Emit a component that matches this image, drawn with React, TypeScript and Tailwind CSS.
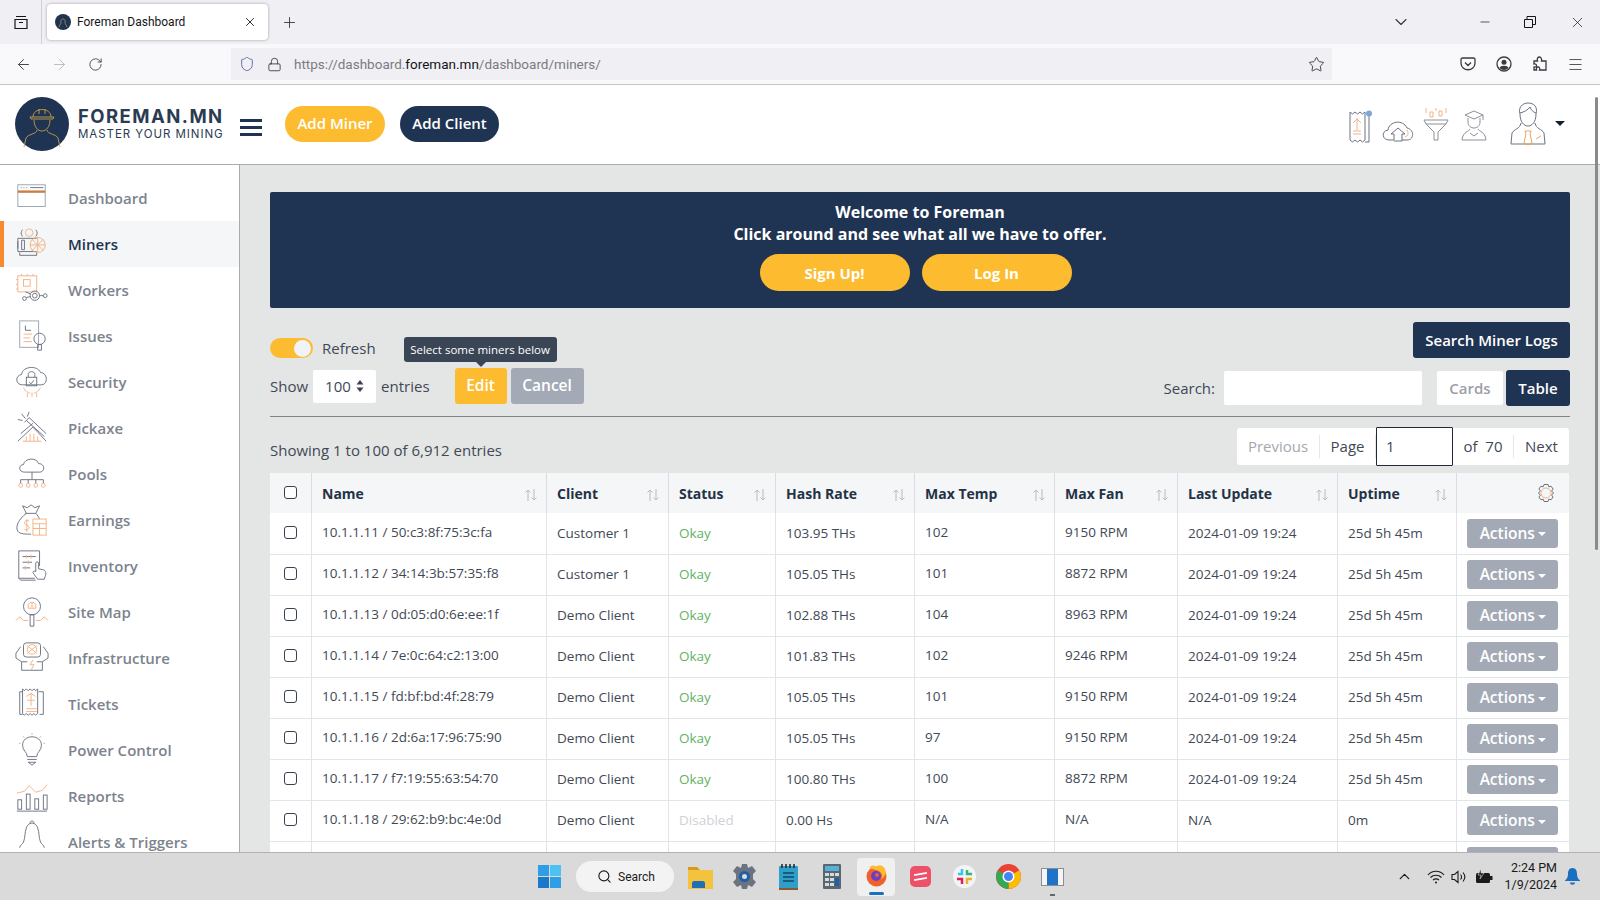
import React from "react";
import { ArrowLeft, ArrowRight, RotateCw, Star, Lock, Shield, Menu, Plus, X, ChevronDown, ChevronUp, Minus, Search } from "lucide-react";

const G = "#6b7280";
const O = "#f3b283";

const Ic = ({ children, w = 36, h = 36 }: { children: React.ReactNode; w?: number; h?: number }) => (
  <svg width={w} height={h} viewBox="0 0 36 36" fill="none" stroke={G} strokeWidth="1" className="shrink-0 overflow-visible">
    {children}
  </svg>
);

const sidebarIcons: Record<string, React.ReactNode> = {
  Dashboard: (
    <>
      <rect x="3" y="4" width="29" height="23" stroke="#9ca3af" />
      <rect x="3" y="10" width="29" height="2.5" fill="#c77f45" stroke="none" />
      <path d="M6 7h1M9 7h1M12 7h1M16 7h14" />
    </>
  ),
  Miners: (
    <>
      <circle cx="15" cy="6" r="4" stroke={O} />
      <path d="M8 3c-2 2-2 5 0 7M22 3c2 2 2 5 0 7" />
      <path d="M3 12h20M3 12v14h20M3 15v8M7 14h3v10H7zM5 27v3h18v-3" />
      <circle cx="24" cy="19" r="8" stroke={O} />
      <path d="M24 11v16M16 19h16M18 13l12 12M30 13L18 25" stroke={O} />
    </>
  ),
  Workers: (
    <>
      <rect x="3" y="3" width="20" height="17" stroke={O} />
      <path d="M1 7h2M1 12h2M1 17h2M7 1v2M13 1v2M19 1v2" stroke={O} />
      <rect x="9" y="7" width="7" height="7" stroke={O} />
      <circle cx="21" cy="24" r="5" />
      <circle cx="21" cy="24" r="2.5" />
      <circle cx="10" cy="27" r="2" />
      <circle cx="32" cy="24" r="2" />
      <path d="M12 26l4-1M26 24h4M11 20l5 2" />
    </>
  ),
  Issues: (
    <>
      <rect x="5" y="2" width="20" height="28" stroke="#9ca3af" />
      <path d="M11 7v5h6" stroke={G} />
      <path d="M9 16h9M9 20h7M9 24h9" stroke={O} />
      <circle cx="26" cy="21" r="6" />
      <path d="M24 27h4v6h-4z" />
    </>
  ),
  Security: (
    <>
      <path d="M8 21c-8 0-8-10-1-11 1-9 17-10 20-2 8 0 8 13 1 13z" />
      <rect x="12" y="13" width="11" height="9" />
      <path d="M14 13v-3c0-4 7-4 7 0v3M15 18l2 2 3-4" />
      <path d="M9 24c2 4 4 5 7 6M27 24c-2 4-4 5-7 6M13 30v4M18 29v5M23 30v4" stroke={O} />
    </>
  ),
  Pickaxe: (
    <>
      <path d="M12 10l19 17M15 7l18 17M10 12l5-5" />
      <path d="M6 24L19 13M3 32L19 17l14 15" />
      <path d="M7 3l4 5M15 1l-2 5M3 9l5 1" />
      <path d="M12 32v-5M16 32v-8M20 32v-8M24 32v-5M8 32h20" stroke={O} />
    </>
  ),
  Pools: (
    <>
      <path d="M10 16c-7 0-6-8-1-8 1-7 14-8 16-1 7 0 7 9 1 9z" />
      <path d="M18 16v8M6 24h24M6 24v4M14 24v4M22 24v4M30 24v4" />
      <circle cx="6" cy="30" r="2" stroke={O} />
      <circle cx="14" cy="30" r="2" stroke={O} />
      <circle cx="22" cy="30" r="2" stroke={O} />
      <circle cx="30" cy="30" r="2" stroke={O} />
    </>
  ),
  Earnings: (
    <>
      <path d="M12 11c-8 6-12 14-9 19 2 3 9 3 14 3M22 11c2 2 3 4 4 6M11 11h11M12 11L8 3l5 2 4-3 4 3 5-2-4 8" />
      <path d="M15 19c-3-1-5 0-5 2 0 3 5 2 5 5 0 2-3 3-5 2M12.500 17v14" stroke={O} />
      <rect x="19" y="17" width="14" height="17" stroke={O} />
      <path d="M19 22h14M19 27h14M26 22v12" stroke={O} />
    </>
  ),
  Inventory: (
    <>
      <path d="M26 18V2H4v29h17M4 31l2 2h16" />
      <path d="M8 8h14M8 14h10M8 20h8" />
      <path d="M12 6v4M17 6v4M14 12v4M11 18v4" stroke={O} />
      <path d="M22 24v-9c0-2 3-2 3 0v6l5 1c3 1 3 4 2 7l-1 3h-7l-5-7c0-2 2-2 3-1z" />
    </>
  ),
  "Site Map": (
    <>
      <circle cx="18" cy="12" r="9" />
      <path d="M14 14v-4l2-2h4l2 2v4zM18 8v6" stroke={O} />
      <path d="M16 21h4v12h-4z" />
      <path d="M1 27l4-4 4 4h5M35 27l-4-4-4 4h-5" stroke={O} />
    </>
  ),
  Infrastructure: (
    <>
      <rect x="9" y="2" width="18" height="15" rx="3" />
      <circle cx="18" cy="9" r="5" stroke={O} />
      <path d="M13 5l10 8M23 5l-10 8" stroke={O} />
      <path d="M6 6L1 13v5l6 4h6M30 6l5 7v5l-6 4h-6" />
      <path d="M7 22v9h22v-9" />
      <path d="M19 20l-3 5h4l-3 6" stroke={O} />
    </>
  ),
  Tickets: (
    <>
      <path d="M8 2l2 2 2-2 2 2 2-2 2 2 2-2 2 2 2-2v26l-2 2-2-2-2 2-2-2-2 2-2-2-2 2-2-2z" />
      <path d="M8 5H5v24h3M25 5h5v24h-4" />
      <path d="M17 6v14M12 10l5-3 5 3M13 14h8M12 23h11M12 26h11" stroke={O} />
    </>
  ),
  "Power Control": (
    <>
      <path d="M13 25c0-5-5-6-5-12 0-12 20-12 20 0 0 6-5 7-5 12z" />
      <path d="M13 28h10M14 31h8l-4 3z" />
      <path d="M18 0v2M8 3l2 2M28 3l-2 2M4 11h2M30 11h2" stroke={O} />
    </>
  ),
  Reports: (
    <>
      <path d="M2 34h32" />
      <rect x="3" y="22" width="4" height="10" />
      <rect x="12" y="16" width="4" height="16" />
      <rect x="21" y="21" width="4" height="11" />
      <rect x="30" y="17" width="4" height="15" />
      <path d="M2 15l8-2 5-6 7 7 7-2 5-6" stroke={O} />
    </>
  ),
  "Alerts & Triggers": (
    <>
      <path d="M5 24c0-3 3-3 4-6 2-5 1-9 3-15 1-3 3-5 6-5s5 2 6 5c2 6 1 10 3 15 1 3 4 3 4 6" />
      <path d="M16-2c0-3 4-3 4 0" />
    </>
  ),
};

const navItems = [
  "Dashboard",
  "Miners",
  "Workers",
  "Issues",
  "Security",
  "Pickaxe",
  "Pools",
  "Earnings",
  "Inventory",
  "Site Map",
  "Infrastructure",
  "Tickets",
  "Power Control",
  "Reports",
  "Alerts & Triggers",
];

const columns = [
  { label: "Name", w: "w-[235px]" },
  { label: "Client", w: "w-[122px]" },
  { label: "Status", w: "w-[107px]" },
  { label: "Hash Rate", w: "w-[139px]" },
  { label: "Max Temp", w: "w-[140px]" },
  { label: "Max Fan", w: "w-[123px]" },
  { label: "Last Update", w: "w-[160px]" },
  { label: "Uptime", w: "w-[119px]" },
];

const rows = [
  ["10.1.1.11 / 50:c3:8f:75:3c:fa", "Customer 1", "Okay", "103.95 THs", "102", "9150 RPM", "2024-01-09 19:24", "25d 5h 45m"],
  ["10.1.1.12 / 34:14:3b:57:35:f8", "Customer 1", "Okay", "105.05 THs", "101", "8872 RPM", "2024-01-09 19:24", "25d 5h 45m"],
  ["10.1.1.13 / 0d:05:d0:6e:ee:1f", "Demo Client", "Okay", "102.88 THs", "104", "8963 RPM", "2024-01-09 19:24", "25d 5h 45m"],
  ["10.1.1.14 / 7e:0c:64:c2:13:00", "Demo Client", "Okay", "101.83 THs", "102", "9246 RPM", "2024-01-09 19:24", "25d 5h 45m"],
  ["10.1.1.15 / fd:bf:bd:4f:28:79", "Demo Client", "Okay", "105.05 THs", "101", "9150 RPM", "2024-01-09 19:24", "25d 5h 45m"],
  ["10.1.1.16 / 2d:6a:17:96:75:90", "Demo Client", "Okay", "105.05 THs", "97", "9150 RPM", "2024-01-09 19:24", "25d 5h 45m"],
  ["10.1.1.17 / f7:19:55:63:54:70", "Demo Client", "Okay", "100.80 THs", "100", "8872 RPM", "2024-01-09 19:24", "25d 5h 45m"],
  ["10.1.1.18 / 29:62:b9:bc:4e:0d", "Demo Client", "Disabled", "0.00 Hs", "N/A", "N/A", "N/A", "0m"],
  ["", "", "", "", "", "", "", ""],
];

const SortArrows = () => (
  <svg width="14" height="14" viewBox="0 0 14 14" fill="none" stroke="#b6bcc4" strokeWidth="1" className="shrink-0 mt-[3px]">
    <path d="M4 13V2M1.500 4.500L4 2l2.500 2.500M10 1v11M7.500 9.500L10 12l2.500-2.500" />
  </svg>
);

const Checkbox = () => <div className="w-[11px] h-[11px] box-content border border-[#374151] rounded-[3px] bg-white mx-auto" />;

const RowCheck = () => <div className="flex justify-center -mt-[2px]"><Checkbox /></div>;

const Actions = () => (
  <div className="w-[91px] h-[29px] mx-auto rounded-[3px] bg-[#a3aab6] text-white text-[15.500px] font-semibold flex items-center justify-center gap-[3px]">
    Actions
    <span className="w-0 h-0 border-x-[4px] border-x-transparent border-t-[4px] border-t-white mt-[2px]" />
  </div>
);

function BrowserChrome() {
  return (
    <div className="shrink-0 font-['Roboto',sans-serif]">
      <div className="h-[44px] bg-[#f0f0f4] flex items-center relative">
        <div className="w-[42px] h-full border-r border-[#cfcfd8] flex items-center justify-center">
          <svg width="16" height="16" viewBox="0 0 16 16" fill="none" stroke="#15141a" strokeWidth="1.200">
            <path d="M3 2.500h10M2 5.500h12v9H2zM6 8.500h4" />
          </svg>
        </div>
        <div className="ml-[5px] w-[221px] h-[36px] rounded-[4px] bg-white shadow-[0_0_3px_rgba(0,0,0,0.35)] flex items-center pl-[8px] pr-[11px]">
          <svg width="16" height="16" viewBox="0 0 16 16" className="shrink-0">
            <circle cx="8" cy="8" r="8" fill="#1f3352" />
            <path d="M4 13c1-3 2-3 2-4-1-3 1-4 2-4s3 1 2 4c0 1 1 1 2 4" fill="none" stroke="#c7a34a" strokeWidth="0.700" />
          </svg>
          <span className="ml-[6px] text-[12px] text-[#15141a] flex-1">Foreman Dashboard</span>
          <X size={14} strokeWidth={1.500} className="text-[#15141a]" />
        </div>
        <Plus size={17} strokeWidth={1.300} className="ml-[13px] text-[#3a3944]" />
        <div className="flex-1" />
        <ChevronDown size={20} strokeWidth={1.400} className="text-[#3a3944] mr-[67px]" />
        <Minus size={14} strokeWidth={1.200} className="text-[#15141a] mr-[32px]" />
        <svg width="12" height="12" viewBox="0 0 12 12" fill="none" stroke="#15141a" strokeWidth="1" className="mr-[33px]">
          <path d="M.500 3.500h8v8h-8zM3 3.500V.500h8.500v8h-3" />
        </svg>
        <X size={17} strokeWidth={1} className="text-[#15141a] mr-[14px]" />
      </div>
      <div className="h-[41px] bg-[#f9f9fb] border-b border-[#c4c4c8] flex items-center">
        <ArrowLeft size={17} strokeWidth={1.300} className="ml-[15px] text-[#3a3944]" />
        <ArrowRight size={17} strokeWidth={1.300} className="ml-[19px] text-[#b8b8bd]" />
        <RotateCw size={15} strokeWidth={1.400} className="ml-[20px] text-[#3a3944]" />
        <div className="ml-[128px] w-[1101px] h-[32px] bg-[#f0f0f4] flex items-center pl-[8px]">
          <Shield size={16} strokeWidth={1.400} className="text-[#5d5fb0]" />
          <Lock size={15} strokeWidth={1.400} className="ml-[12px] text-[#3a3944]" />
          <span className="ml-[12px] text-[13.500px] text-[#7b7b80]">
            https://dashboard.<span className="text-[#15141a]">foreman.mn</span>/dashboard/miners/
          </span>
          <div className="flex-1" />
          <Star size={17} strokeWidth={1.300} className="mr-[7px] text-[#3a3944]" />
        </div>
        <svg width="16" height="16" viewBox="0 0 16 16" fill="none" stroke="#3a3944" strokeWidth="1.300" className="ml-[128px]">
          <path d="M2.500 2h11c1 0 1.500.6 1.500 1.500V7c0 9-14 9-14 0V3.500C1 2.600 1.500 2 2.500 2zM5 6.500L8 9.500l3-3" />
        </svg>
        <svg width="16" height="16" viewBox="0 0 16 16" fill="none" className="ml-[20px]">
          <circle cx="8" cy="8" r="7" stroke="#3a3944" strokeWidth="1.300" />
          <circle cx="8" cy="6.200" r="2.500" fill="#3a3944" />
          <path d="M3.500 12c1-3 8-3 9 0-2 2.500-7 2.500-9 0z" fill="#3a3944" />
        </svg>
        <svg width="16" height="16" viewBox="0 0 16 16" fill="none" stroke="#3a3944" strokeWidth="1.300" className="ml-[20px]">
          <path d="M2 5h3.500C4.500 2.500 6 1 7.500 1S10 3 9.500 5H14v9H7.500c.8-2-.4-3-1.500-3s-2 1-1.500 3H2v-3c2 .5 2.500-.5 2.500-1.500S3.500 7.500 2 8z" />
        </svg>
        <Menu size={17} strokeWidth={1.200} className="ml-[19px] text-[#3a3944]" />
      </div>
    </div>
  );
}

function TopBar() {
  return (
    <div className="shrink-0 h-[80px] pb-[2px] bg-white border-b border-[#a9abad] flex items-center font-['Open_Sans',sans-serif]">
      <svg width="54" height="54" viewBox="0 0 54 54" className="ml-[15px] shrink-0">
        <circle cx="27" cy="27" r="27" fill="#1f3352" />
        <g fill="none" stroke="#c7a34a" strokeWidth="0.900">
          <path d="M18 20c0-10 18-10 18 0M15 20h24l-1 2H16zM24 12v5M30 12v5" />
          <path d="M19 23c0 7 4 11 8 11s8-4 8-11" />
          <path d="M22 33c0 4-9 4-11 8l-2 9M32 33c0 4 9 4 11 8l2 9" />
        </g>
      </svg>
      <div className="ml-[9px] w-[146px] leading-none">
        <div className="font-['Inter',sans-serif] text-[18.500px] font-bold text-[#2b3b52] tracking-[1.450px] whitespace-nowrap">FOREMAN.MN</div>
        <div className="mt-[4px] font-['Inter',sans-serif] text-[11.500px] font-normal text-[#2b3b52] tracking-[0.950px] whitespace-nowrap">MASTER YOUR MINING</div>
      </div>
      <div className="ml-[16px] w-[22px] flex flex-col gap-[4px] mt-[7px]">
        <div className="h-[3px] bg-[#1f3352]" />
        <div className="h-[3px] bg-[#1f3352]" />
        <div className="h-[3px] bg-[#1f3352]" />
      </div>
      <div className="ml-[23px] w-[100px] h-[36px] rounded-full bg-[#fdbb30] text-white text-[15px] font-semibold flex items-center justify-center">Add Miner</div>
      <div className="ml-[15px] w-[99px] h-[36px] rounded-full bg-[#1f3352] text-white text-[15px] font-semibold flex items-center justify-center">Add Client</div>
      <div className="flex-1" />

      <svg width="24" height="34" viewBox="0 0 24 34" fill="none" stroke={G} strokeWidth="1" className="mt-[7px]">
        <path d="M1 2l2.500 2L6 2l2.500 2L11 2l2.500 2L16 2v28l-2.500 2-2.500-2-2.500 2L6 30l-2.500 2L1 30zM20 4v28h-4" />
        <path d="M8 8v12M4 13l4-4 4 4M4 21h8M4 24h8" stroke={O} />
        <circle cx="20" cy="3.500" r="3" fill="#7ea6d8" stroke="none" />
      </svg>
      <svg width="32" height="22" viewBox="0 0 32 22" fill="none" stroke={G} strokeWidth="1" className="ml-[9px] mt-[15px]">
        <path d="M12 20H7C0 20-1 11 6 10c1-9 15-11 19-2 7 1 8 12 0 12h-5M12 20v-6H9l7-6 7 6h-3v7h-8" />
        <path d="M25 10c2 3 1 6-2 7" stroke={O} />
      </svg>
      <svg width="26" height="34" viewBox="0 0 26 34" fill="none" stroke="#8b9098" strokeWidth="1" className="ml-[9px] mt-[1px]">
        <path d="M1 13h24M1 13l2 4h20l2-4M3 17l8 8v8h4v-8l8-8" />
        <path d="M3 1v5M13 1v3M23 1v5M7 5h3v5H7zM16 4h3v5h-3z" stroke={O} />
      </svg>
      <svg width="26" height="32" viewBox="0 0 26 32" fill="none" stroke="#8b9098" strokeWidth="1" className="ml-[12px] mt-[3px]">
        <path d="M4 6l9-4 9 4-9 4zM22 6v5M7 9v4c0 8 12 8 12 0V9" />
        <path d="M9 20c-1 3-7 2-8 11h24c-1-9-7-8-8-11M9 24l4 3 4-3" />
      </svg>
      <svg width="36" height="44" viewBox="0 0 36 44" fill="none" stroke={G} strokeWidth="1" className="ml-[23px] mt-[1px]">
        <path d="M10 12c-2-6 2-11 8-11s10 4 8 11c0 8-4 12-8 12s-8-4-8-12zM10 11c4-1 8-3 10-6 1 3 3 5 6 6" />
        <path d="M11 21c-1 6-7 6-9 10l-1 11h34l-1-11c-2-4-8-4-9-10" />
        <path d="M15 29h6l-1 3 2 9-4 2-4-2 2-9z" stroke="#eda45c" />
        <path d="M26 37l5-3" stroke="#eda45c" />
      </svg>
      <span className="ml-[9px] mr-[35px] w-0 h-0 border-x-[5px] border-x-transparent border-t-[5px] border-t-[#15202f]" />
    </div>
  );
}

function Sidebar() {
  return (
    <aside className="shrink-0 w-[240px] h-full bg-white border-r border-[#a9abad] pt-[10px] overflow-hidden">
      {navItems.map((label) => {
        const active = label === "Miners";
        return (
          <div key={label} className={`h-[46px] flex items-center ${active ? "bg-[#f4f6f8] border-l-[4px] border-[#f58a2e] pl-[11px]" : "pl-[15px]"}`}>
            <Ic w={34} h={34}>{sidebarIcons[label]}</Ic>
            <span className={`ml-[19px] text-[15px] font-semibold whitespace-nowrap ${active ? "text-[#1f3352]" : "text-[#7d838e]"}`}>{label}</span>
          </div>
        );
      })}
    </aside>
  );
}

function Toolbar() {
  return (
    <div className="mt-[14px] h-[84px] flex justify-between text-[15px] text-[#3f4955]">
      <div className="pt-[16px]">
        <div className="h-[20px] flex items-center">
          <div className="w-[43px] h-[20px] rounded-full bg-[#fdbb30] relative">
            <span className="absolute right-[2px] top-[1.500px] w-[17px] h-[17px] rounded-full bg-[#f0f4f8]" />
          </div>
          <span className="ml-[9px]">Refresh</span>
        </div>
        <div className="mt-[10px] h-[36px] flex items-center">
          <span>Show</span>
          <div className="ml-[5px] w-[63px] h-[33px] bg-white rounded-[2px] flex items-center pl-[12px] gap-[5px]">
            100
            <svg width="8" height="12" viewBox="0 0 8 12" fill="#374151">
              <path d="M4 0l3.500 4.500h-7zM4 12L.500 7.500h7z" />
            </svg>
          </div>
          <span className="ml-[5px]">entries</span>
          <div className="ml-[25px] w-[52px] h-[36px] rounded-[3px] bg-[#fdbb30] text-white text-[15.500px] font-semibold flex items-center justify-center relative">
            Edit
            <div className="absolute left-[-51px] top-[-31px] w-[153px] h-[25px] rounded-[3px] bg-[#3a4655] text-white text-[11.500px] font-normal flex items-center justify-center whitespace-nowrap">
              Select some miners below
              <span className="absolute bottom-[-5px] left-[71px] w-0 h-0 border-x-[6px] border-x-transparent border-t-[6px] border-t-[#3a4655]" />
            </div>
          </div>
          <div className="ml-[4px] w-[73px] h-[36px] rounded-[3px] bg-[#a3aab6] text-white text-[15.500px] font-semibold flex items-center justify-center">Cancel</div>
        </div>
      </div>
      <div className="flex flex-col items-end">
        <div className="w-[157px] h-[36px] rounded-[3px] bg-[#1f3352] text-white font-semibold flex items-center justify-center">Search Miner Logs</div>
        <div className="mt-[12px] h-[36px] flex items-center">
          <span>Search:</span>
          <div className="ml-[9px] w-[198px] h-[34px] bg-white rounded-[2px]" />
          <div className="ml-[15px] w-[66px] h-[34px] bg-white rounded-[2px] text-[#9aa0a8] font-semibold flex items-center justify-center">Cards</div>
          <div className="ml-[3px] w-[64px] h-[36px] rounded-[3px] bg-[#1f3352] text-white font-semibold flex items-center justify-center">Table</div>
        </div>
      </div>
    </div>
  );
}

function Pagination() {
  return (
    <div className="mt-[10px] h-[39px] flex items-center justify-between text-[#3f4955]">
      <span className="text-[15px] mt-[8px]">Showing 1 to 100 of 6,912 entries</span>
      <div className="mr-[1px] flex items-center h-[37px] bg-white rounded-[3px] text-[15px] divide-x divide-[#e5e7eb]">
        <div className="w-[83px] text-center text-[#a3a8af]">Previous</div>
        <div className="w-[56px] text-center">Page</div>
        <div className="w-[77px] h-[39px] border border-[#1f2937] rounded-[1px] bg-white pl-[9px] flex items-center">1</div>
        <div className="w-[61px] text-center border-l-0">of&nbsp; 70</div>
        <div className="w-[55px] text-center">Next</div>
      </div>
    </div>
  );
}

function MinerTable() {
  return (
    <table className="mt-[7px] w-[1299px] table-fixed border-collapse text-[13.500px] text-[#3f4955]">
      <colgroup>
        <col className="w-[41px]" />
        {columns.map((c) => (
          <col key={c.label} className={c.w} />
        ))}
        <col className="w-[113px]" />
      </colgroup>
      <thead>
        <tr className="h-[40px] bg-[#f4f6f8]">
          <th className="border-r border-[#d9dce0]"><RowCheck /></th>
          {columns.map((c) => (
            <th key={c.label} className="border-r border-[#d9dce0] pl-[10.500px] pr-[8px] text-left font-bold text-[#243245] text-[14px]">
              <div className="flex items-center justify-between">
                {c.label}
                <SortArrows />
              </div>
            </th>
          ))}
          <th>
            <div className="flex justify-end pr-[13px]">
              <svg width="20" height="20" viewBox="0 0 20 20" fill="none" stroke={G} strokeWidth="1">
                <path d="M8 1.500h4l.8 2.300 2.300-.6 2 2.800-1.500 1.900L17.500 10l-1.900 2.100 1.500 1.900-2 2.800-2.300-.6L12 18.500H8l-.8-2.300-2.300.6-2-2.800 1.500-1.900L2.500 10l1.900-2.100L2.900 6l2-2.800 2.300.6z" />
                <circle cx="10" cy="10" r="5" stroke={O} />
              </svg>
            </div>
          </th>
        </tr>
      </thead>
      <tbody>
        {rows.map((r, i) => (
          <tr key={i} className="h-[41px] bg-white border-b border-[#e2e5e8]">
            <td className="border-r border-[#e2e5e8]"><RowCheck /></td>
            {r.map((cell, j) => (
              <td
                key={j}
                className={`border-r border-[#e2e5e8] pl-[10.500px] whitespace-nowrap ${j === 0 || j === 4 || j === 5 ? "pb-[2px]" : ""} ${
                  cell === "Okay" ? "text-[#5fb35f]" : cell === "Disabled" ? "text-[#cfd2d6]" : ""
                }`}
              >
                {cell}
              </td>
            ))}
            <td><Actions /></td>
          </tr>
        ))}
      </tbody>
    </table>
  );
}

function Taskbar() {
  return (
    <div className="shrink-0 h-[48px] bg-[#dadada] border-t border-[#b3b3b3] flex items-center font-['Roboto',sans-serif] text-[#1b1b1b]">
      <svg width="23" height="23" viewBox="0 0 23 23" className="ml-[538px] shrink-0">
        <path d="M0 0h11v11H0z" fill="#2f9ee6" />
        <path d="M12 0h11v11H12z" fill="#4fc0f2" />
        <path d="M0 12h11v11H0z" fill="#1a78c9" />
        <path d="M12 12h11v11H12z" fill="#2f9ee6" />
      </svg>
      <div className="ml-[15px] w-[98px] h-[31px] rounded-full bg-[#f3f3f3] flex items-center pl-[21px] gap-[6px] text-[12px]">
        <Search size={15} strokeWidth={1.800} />
        Search
      </div>
      <svg width="25" height="24" viewBox="0 0 25 24" className="ml-[14px]">
        <path d="M0 2h9l3 3h13v19H0z" fill="#f3c33d" />
        <path d="M0 2h9l3 3H0z" fill="#d99a1c" />
        <path d="M4 23v-5c0-1 1-2 2-2h9c1 0 2 1 2 2v5z" fill="#1f6fb5" />
      </svg>
      <svg width="25" height="25" viewBox="0 0 25 25" className="ml-[19px]">
        <path d="M10 0h5l1 4 4-2 4 5-3 3v5l3 3-4 5-4-2-1 4h-5l-1-4-4 2-4-5 3-3v-5L1 7l4-5 4 2z" fill="#6b7280" />
        <circle cx="12.500" cy="12.500" r="5.500" fill="#1e5fa8" />
        <circle cx="12.500" cy="12.500" r="2.500" fill="#dadada" />
      </svg>
      <svg width="19" height="26" viewBox="0 0 19 26" className="ml-[22px]">
        <rect y="2" width="19" height="24" rx="1" fill="#2f9fc9" />
        <path d="M0 24h19v2H0z" fill="#8a5a2b" />
        <path d="M3 0v4M7 0v4M11 0v4M15 0v4" stroke="#222" strokeWidth="1.500" />
        <path d="M4 9h11M4 13h11M4 17h11" stroke="#0f4a66" strokeWidth="1.500" />
      </svg>
      <svg width="18" height="25" viewBox="0 0 18 25" className="ml-[25px]">
        <rect width="18" height="25" rx="1" fill="#5b6670" />
        <path d="M2 2h14v5H2z" fill="#54b4d8" />
        <path d="M2 9h4v3H2zM7 9h4v3H7zM2 14h4v3H2zM7 14h4v3H7zM2 19h4v3H2zM7 19h4v3H7z" fill="#d6dbe0" />
        <path d="M12 9h4v3h-4z" fill="#d6dbe0" />
        <path d="M12 14h4v8h-4z" fill="#1e5fa8" />
      </svg>
      <div className="ml-[16px] w-[38px] h-[38px] rounded-[4px] bg-[#f0f0f0] flex flex-col items-center justify-end relative">
        <svg width="21" height="23" viewBox="0 0 21 23" className="absolute top-[6px]">
          <circle cx="10.500" cy="12.500" r="10" fill="#f0622c" />
          <path d="M3 4c3-3 5-3 7-1 3-3 7-2 9 2 2 4 0 8-4 10 3-4 0-8-5-9z" fill="#fbbc2e" />
          <circle cx="10" cy="12" r="5" fill="#6a3fc7" />
          <circle cx="11" cy="11" r="2" fill="#f0622c" />
        </svg>
        <div className="w-[15px] h-[3px] rounded-full bg-[#1a6fc0] mb-[1px]" />
      </div>
      <div className="ml-[15px] w-[21px] h-[21px] rounded-[5px] bg-[#ee5068] flex flex-col items-center justify-center gap-[3px]">
        <div className="w-[13px] h-[2px] bg-white -rotate-[10deg]" />
        <div className="w-[13px] h-[2px] bg-white -rotate-[10deg]" />
      </div>
      <svg width="23" height="23" viewBox="0 0 23 23" className="ml-[22px]">
        <circle cx="11.500" cy="11.500" r="11.500" fill="#f4f4f4" />
        <path d="M9 4v5H5" stroke="#36c5f0" strokeWidth="2.500" fill="none" />
        <path d="M19 9h-5V5" stroke="#2eb67d" strokeWidth="2.500" fill="none" />
        <path d="M14 19v-5h5" stroke="#ecb22e" strokeWidth="2.500" fill="none" />
        <path d="M4 14h5v5" stroke="#e01e5a" strokeWidth="2.500" fill="none" />
      </svg>
      <svg width="25" height="25" viewBox="0 0 25 25" className="ml-[20px]">
        <circle cx="12.500" cy="12.500" r="12.500" fill="#ea4335" />
        <path d="M12.500 12.500L23.300 6.300A12.500 12.500 0 0 1 12.500 25z" fill="#fbbc04" />
        <path d="M12.500 12.500L12.500 25A12.500 12.500 0 0 1 1.700 6.300z" fill="#34a853" />
        <circle cx="12.500" cy="12.500" r="6" fill="#fff" />
        <circle cx="12.500" cy="12.500" r="4.500" fill="#4285f4" />
      </svg>
      <div className="ml-[20px] w-[23px] relative">
        <div className="w-[23px] h-[18px] bg-[#f5f5f5] border border-[#8b8f95] flex justify-center">
          <div className="w-[11px] h-full bg-[#1e73c8]" />
        </div>
        <div className="absolute left-[9px] top-[26px] w-[5px] h-[2px] bg-[#666]" />
      </div>
      <div className="flex-1" />
      <ChevronUp size={17} strokeWidth={1.800} className="mr-[14px]" />
      <svg width="18" height="14" viewBox="0 0 18 14" fill="none" stroke="#1b1b1b" strokeWidth="1.200" className="mr-[6px]">
        <path d="M1 5c4-5 12-5 16 0M3.500 7.500c3-3 8-3 11 0M6 10c2-1.500 4-1.500 6 0" />
        <circle cx="9" cy="12.500" r="1" fill="#1b1b1b" stroke="none" />
      </svg>
      <svg width="15" height="14" viewBox="0 0 15 14" fill="none" stroke="#1b1b1b" strokeWidth="1.100" className="mr-[9px]">
        <path d="M1 4.500h2.500L7 1.500v11l-3.500-3H1zM9.500 4.500c1.300 1.500 1.300 3.500 0 5M12 2.500c2.300 2.800 2.300 6.200 0 9" />
      </svg>
      <svg width="18" height="16" viewBox="0 0 18 16" className="mr-[14px]">
        <rect x="1" y="4" width="14" height="10" rx="1.500" fill="#1b1b1b" />
        <rect x="15" y="7" width="2.500" height="4" fill="#1b1b1b" />
        <path d="M6 0L3 6h3l-1 4 4-6H6z" fill="#1b1b1b" stroke="#dadada" strokeWidth="0.600" />
      </svg>
      <div className="w-[50px] flex flex-col items-end gap-[2px] text-[12.500px] leading-[14.500px] whitespace-nowrap">
        <div>2:24 PM</div>
        <div>1/9/2024</div>
      </div>
      <svg width="15" height="17" viewBox="0 0 15 17" fill="#1a6fc0" className="ml-[8px] mr-[20px]">
        <path d="M7.500 0C4 0 3 3 3 6c0 3-1 5-3 6.500V13h15v-.5C13 11 12 9 12 6c0-3-1-6-4.500-6zM5 14.500h5c0 3-5 3-5 0z" />
      </svg>
    </div>
  );
}

export default function App() {
  return (
    <div className="w-[1600px] h-[900px] overflow-hidden flex flex-col font-['Open_Sans',sans-serif]">
      <BrowserChrome />
      <TopBar />
      <div className="flex-1 min-h-0 flex bg-[#e4e6e6] relative">
        <Sidebar />
        <main className="flex-1 min-w-0 h-full overflow-hidden pl-[30px] pr-[30px] pt-[27px]">
          <div className="h-[116px] bg-[#1f3352] rounded-[2px] flex flex-col items-center pt-[9px] text-white text-[16px] font-bold leading-[22px]">
            <div>Welcome to Foreman</div>
            <div>Click around and see what all we have to offer.</div>
            <div className="mt-[9px] mr-[9px] flex gap-[12px]">
              <div className="w-[150px] h-[37px] rounded-full bg-[#fdbb30] flex items-center justify-center text-[15px]">Sign Up!</div>
              <div className="w-[150px] h-[37px] rounded-full bg-[#fdbb30] flex items-center justify-center text-[15px]">Log In</div>
            </div>
          </div>
          <Toolbar />
          <div className="mt-[10px] border-t border-[#808488]" />
          <Pagination />
          <MinerTable />
        </main>
        <div className="absolute right-[2px] top-[-68px] w-[3px] h-[453px] bg-[#8a8a8a] rounded-full" />
      </div>
      <Taskbar />
    </div>
  );
}
